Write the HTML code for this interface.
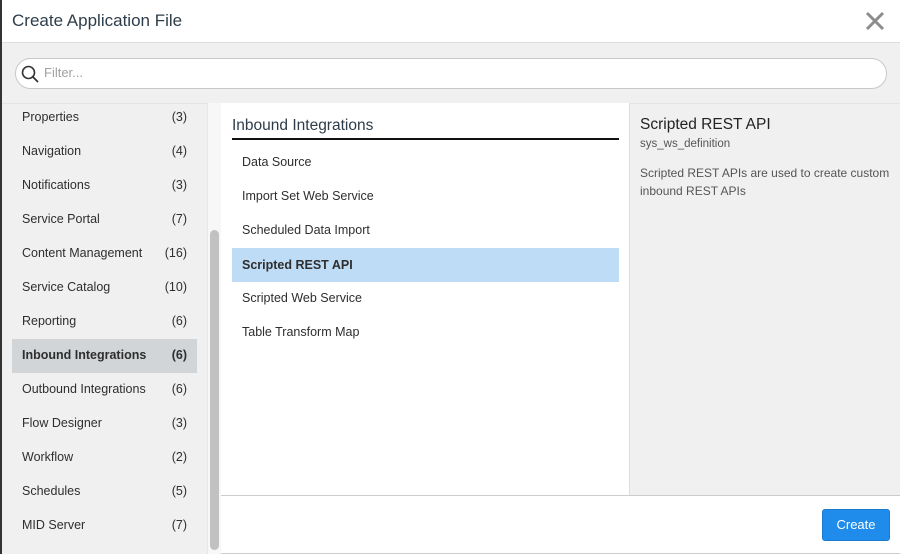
<!DOCTYPE html>
<html><head><meta charset="utf-8"><style>
*{margin:0;padding:0;box-sizing:border-box}
body{width:900px;height:554px;overflow:hidden;background:#f0f0f0;font-family:"Liberation Sans",sans-serif;color:#2e2e2e;position:relative}
.a{position:absolute}
.hdr{left:0;top:0;width:900px;height:43px;background:#fff;border-bottom:1px solid #ddd}
.title{left:12px;top:11px;font-size:17px;color:#2e3d49}
.filt{left:15px;top:58px;width:872px;height:31px;border:1px solid #c8c8c8;border-radius:16px;background:#fff}
.ph{left:44px;top:65px;font-size:13px;color:#a0a0a0}
.si{position:absolute;left:12px;width:185px;height:34px;font-size:12.5px;line-height:35px;padding:0 10px}
.si span{float:right}
.sel{background:#d1d5d8;font-weight:bold;line-height:33px}
.mid{left:221px;top:103px;width:409px;height:393px;background:#fff;border-right:1px solid #ddd}
.mi{position:absolute;left:11px;width:387px;height:34px;line-height:35px;padding-left:10px;font-size:12.5px}
.right{left:630px;top:103px;width:270px;height:393px}
.foot{left:221px;top:495px;width:679px;height:59px;background:#fff;border-top:1px solid #ccc;border-bottom:1px solid #ccc}
.btn{left:822px;top:509px;width:68px;height:32px;background:#1f8ceb;border:1px solid #1a7ad0;border-radius:3px;color:#fff;font-size:13px;text-align:center;line-height:30px}
</style></head><body>
<div class="a" style="left:0;top:0;width:2px;height:554px;background:#333;z-index:5"></div>
<div class="a hdr"></div>
<div class="a title">Create Application File</div>
<svg class="a" style="left:864px;top:10px" width="22" height="22" viewBox="0 0 22 22"><path d="M3 3L19 19M19 3L3 19" stroke="#8c8c8c" stroke-width="3"/></svg>
<div class="a filt"></div>
<svg class="a" style="left:20px;top:64px" width="20" height="20" viewBox="0 0 20 20"><circle cx="8.5" cy="8.5" r="6" fill="none" stroke="#333" stroke-width="1.6"/><path d="M13 13L18 18" stroke="#333" stroke-width="1.8"/></svg>
<div class="a ph">Filter...</div>
<div class="a" style="left:0;top:103px;width:900px;height:1px;background:#e4e4e4"></div>
<div class="a" style="left:207px;top:103px;width:14px;height:451px;background:#f7f7f7;border-left:1px solid #e6e6e6"></div>
<div class="a" style="left:210px;top:230px;width:9px;height:320px;background:#c1c1c1;border-radius:5px"></div>
<div class="si" style="top:100px">Properties<span>(3)</span></div>
<div class="si" style="top:134px">Navigation<span>(4)</span></div>
<div class="si" style="top:168px">Notifications<span>(3)</span></div>
<div class="si" style="top:202px">Service Portal<span>(7)</span></div>
<div class="si" style="top:236px">Content Management<span>(16)</span></div>
<div class="si" style="top:270px">Service Catalog<span>(10)</span></div>
<div class="si" style="top:304px">Reporting<span>(6)</span></div>
<div class="si sel" style="top:339px">Inbound Integrations<span>(6)</span></div>
<div class="si" style="top:372px">Outbound Integrations<span>(6)</span></div>
<div class="si" style="top:406px">Flow Designer<span>(3)</span></div>
<div class="si" style="top:440px">Workflow<span>(2)</span></div>
<div class="si" style="top:474px">Schedules<span>(5)</span></div>
<div class="si" style="top:508px">MID Server<span>(7)</span></div>
<div class="a mid">
<div class="a" style="left:11px;top:14px;font-size:15.5px;color:#2e3d49">Inbound Integrations</div>
<div class="a" style="left:11px;top:35px;width:387px;height:2px;background:#111"></div>
<div class="mi" style="top:42px">Data Source</div>
<div class="mi" style="top:76px">Import Set Web Service</div>
<div class="mi" style="top:110px">Scheduled Data Import</div>
<div class="mi" style="top:145px;background:#bfdcf6;font-weight:bold;line-height:34px">Scripted REST API</div>
<div class="mi" style="top:178px">Scripted Web Service</div>
<div class="mi" style="top:212px">Table Transform Map</div>
</div>
<div class="a right">
<div class="a" style="left:10px;top:13px;font-size:15.5px;color:#222">Scripted REST API</div>
<div class="a" style="left:10px;top:35px;font-size:11.5px;color:#555">sys_ws_definition</div>
<div class="a" style="left:10px;top:61px;font-size:12px;line-height:18px;color:#555;width:260px">Scripted REST APIs are used to create custom inbound REST APIs</div>
</div>
<div class="a foot"></div>
<div class="a btn">Create</div>
</body></html>
